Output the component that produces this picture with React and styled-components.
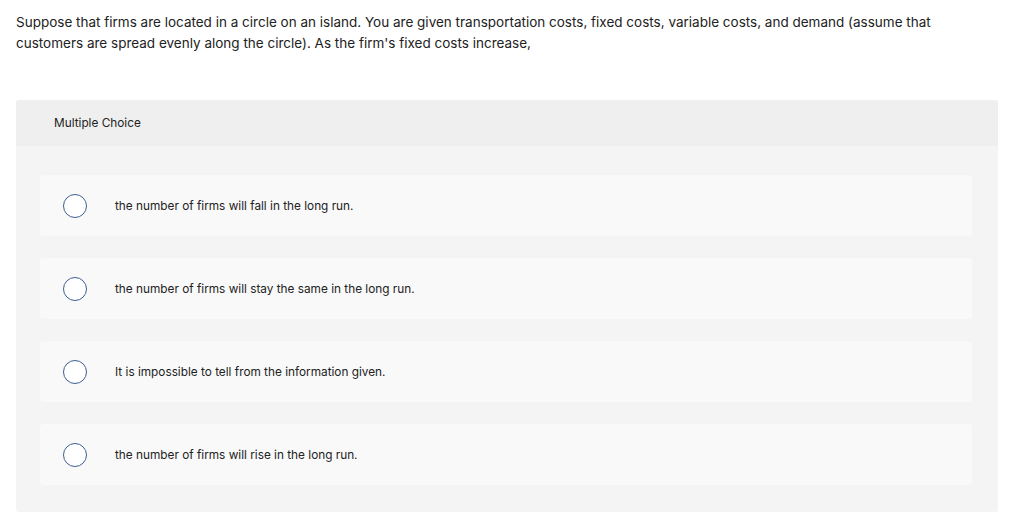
import React from "react";
import styled, { createGlobalStyle } from "styled-components";

const GlobalStyle = createGlobalStyle`
  body {
    margin: 0;
    background: #fff;
    font-family: "Inter", "Liberation Sans", sans-serif;
    color: #222;
  }
`;

const Page = styled.div`
  padding: 12px 26px 10px 16px;
`;

const Question = styled.p`
  margin: 0 0 46px;
  font-size: 13.5px;
  line-height: 21px;
  color: #222;
`;

const Panel = styled.div`
  background: #f4f4f4;
  border-radius: 3px;
  overflow: hidden;
`;

const PanelHeader = styled.div`
  height: 46px;
  display: flex;
  align-items: center;
  padding-left: 38px;
  background: #efefef;
  font-size: 11.8px;
  color: #222;
`;

const Choices = styled.div`
  display: flex;
  flex-direction: column;
  gap: 22px;
  padding: 29px 26px 27px 24px;
`;

const Choice = styled.label`
  height: 61px;
  display: flex;
  align-items: center;
  background: #f9f9f9;
  border-radius: 4px;
  padding-left: 23px;
  cursor: pointer;
`;

const Radio = styled.span`
  width: 22px;
  height: 22px;
  border-radius: 50%;
  border: 1.5px solid #3d5f91;
  background: #fff;
  flex-shrink: 0;
  margin-right: 28px;
`;

const ChoiceText = styled.span`
  font-size: 11.8px;
  color: #222;
`;

const options = [
  "the number of firms will fall in the long run.",
  "the number of firms will stay the same in the long run.",
  "It is impossible to tell from the information given.",
  "the number of firms will rise in the long run.",
];

export default function App() {
  return (
    <>
      <GlobalStyle />
      <Page>
        <Question>
          Suppose that firms are located in a circle on an island. You are given transportation costs, fixed costs,
          variable costs, and demand (assume that customers are spread evenly along the circle). As the firm's fixed
          costs increase,
        </Question>
        <Panel>
          <PanelHeader>Multiple Choice</PanelHeader>
          <Choices>
            {options.map((o) => (
              <Choice key={o}>
                <Radio />
                <ChoiceText>{o}</ChoiceText>
              </Choice>
            ))}
          </Choices>
        </Panel>
      </Page>
    </>
  );
}
